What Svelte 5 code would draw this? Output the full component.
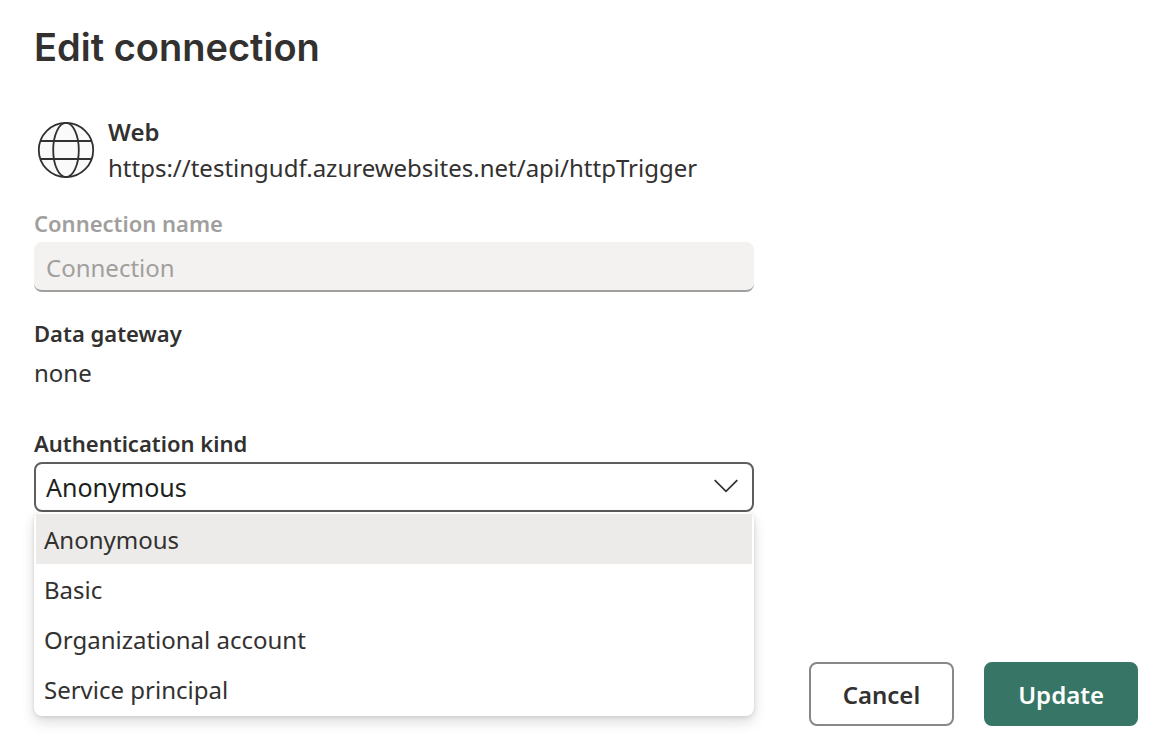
<script lang="ts">
  const kinds = ['Anonymous', 'Basic', 'Organizational account', 'Service principal'];

  let selected = $state('Anonymous');
  let open = $state(true);

  function choose(kind: string) {
    selected = kind;
    open = false;
  }

  function toggle(e: MouseEvent) {
    e.preventDefault();
    open = !open;
  }

  function handleKeydown(e: KeyboardEvent) {
    if (e.key === 'Escape') {
      open = false;
    }
  }
</script>

<svelte:window onkeydown={handleKeydown} />

<form class="dialog" onsubmit={(e) => e.preventDefault()}>
  <h1>Edit connection</h1>

  <div class="fields">
    <div class="source">
      <svg class="globe" viewBox="0 0 60 60" fill="none" stroke="#323130" stroke-width="1.8" aria-hidden="true">
        <circle cx="30" cy="30" r="27.2" fill="#fafafa" />
        <ellipse cx="30" cy="30" rx="12.8" ry="27.2" />
        <path d="M4.5 21h51M4.5 39h51" />
      </svg>
      <div class="source-text">
        <strong>Web</strong>
        <span class="url">https://testingudf.azurewebsites.net/api/httpTrigger</span>
      </div>
    </div>

    <div class="field name-field">
      <label class="muted" for="connection-name">Connection name</label>
      <input id="connection-name" type="text" placeholder="Connection" disabled />
    </div>

    <div class="field gateway">
      <h2>Data gateway</h2>
      <span>none</span>
    </div>

    <div class="field">
      <label for="auth-kind">Authentication kind</label>
      <div class="dropdown">
        <select id="auth-kind" bind:value={selected} onmousedown={toggle}>
          {#each kinds as kind}
            <option value={kind}>{kind}</option>
          {/each}
        </select>
        <svg class="chevron" viewBox="0 0 24 14" fill="none" stroke="#323130" stroke-width="1.7" aria-hidden="true">
          <path d="M0.7 1.2 12 12.4 23.3 1.2" />
        </svg>
        {#if open}
          <div class="menu" role="listbox" aria-label="Authentication kind">
            {#each kinds as kind}
              <button
                type="button"
                class="option"
                class:active={kind === selected}
                role="option"
                aria-selected={kind === selected}
                onclick={() => choose(kind)}
              >{kind}</button>
            {/each}
          </div>
        {/if}
      </div>
    </div>
  </div>

  <div class="actions">
    <button type="button" class="btn">Cancel</button>
    <button type="submit" class="btn primary">Update</button>
  </div>
</form>

<style>
  :global(body) {
    margin: 0;
    background: #ffffff;
  }
  .dialog {
    box-sizing: border-box;
    padding: 24px 30px 28px 34px;
    font-family: 'Segoe UI', 'Noto Sans', sans-serif;
    font-size: 24px;
    color: #323130;
  }
  h1 {
    margin: 0;
    font-family: Inter, sans-serif;
    font-size: 38px;
    font-weight: 600;
    line-height: 46px;
  }
  h2,
  label {
    margin: 0;
    font-size: 22px;
    font-weight: 600;
    line-height: 38px;
  }
  .muted {
    color: #a19f9d;
  }
  .fields {
    max-width: 720px;
    margin-top: 44px;
  }
  .source {
    display: flex;
    align-items: center;
    gap: 10px;
  }
  .globe {
    width: 64px;
    height: 64px;
    padding: 2px;
    box-sizing: border-box;
    flex-shrink: 0;
  }
  .source-text {
    display: flex;
    flex-direction: column;
    min-width: 0;
    line-height: 36px;
  }
  .source-text strong {
    font-weight: 600;
  }
  .url {
    overflow-wrap: anywhere;
  }
  .field {
    display: flex;
    flex-direction: column;
  }
  .name-field {
    margin-top: 18px;
  }
  .gateway {
    margin: 22px 0 30px;
    line-height: 42px;
  }
  input,
  select {
    width: 100%;
    height: 50px;
    box-sizing: border-box;
    border-radius: 8px;
    font: inherit;
  }
  input {
    padding: 2px 12px 0;
    border: 0;
    border-bottom: 2px solid #a19f9d;
    background: #f3f2f1;
  }
  input::placeholder {
    color: #a19f9d;
    opacity: 1;
  }
  .dropdown {
    position: relative;
  }
  select {
    display: block;
    padding: 0 50px 0 10px;
    border: 2px solid #605e5c;
    appearance: none;
    background: #ffffff;
    color: #201f1e;
    font-size: 25px;
  }
  .chevron {
    position: absolute;
    top: 17px;
    right: 16px;
    width: 24px;
    height: 14px;
    pointer-events: none;
  }
  .menu {
    position: absolute;
    top: 100%;
    left: 0;
    right: 0;
    padding: 2px;
    border-radius: 8px;
    background: #ffffff;
    box-shadow: 0 6px 14px rgba(0, 0, 0, 0.14), 0 1px 4px rgba(0, 0, 0, 0.12);
  }
  .option {
    display: block;
    width: 100%;
    height: 50px;
    padding: 0 8px;
    border: 0;
    background: #ffffff;
    color: #323130;
    font: inherit;
    text-align: left;
  }
  .option.active,
  .option:hover {
    background: #edebe9;
  }
  .actions {
    display: flex;
    justify-content: flex-end;
    gap: 30px;
    margin-top: 150px;
  }
  .btn {
    height: 64px;
    padding: 0 32px;
    border: 2px solid #8a8886;
    border-radius: 8px;
    background: #ffffff;
    color: #323130;
    font: inherit;
    font-weight: 600;
  }
  .primary {
    border-color: #377667;
    background: #377667;
    color: #ffffff;
  }
</style>
